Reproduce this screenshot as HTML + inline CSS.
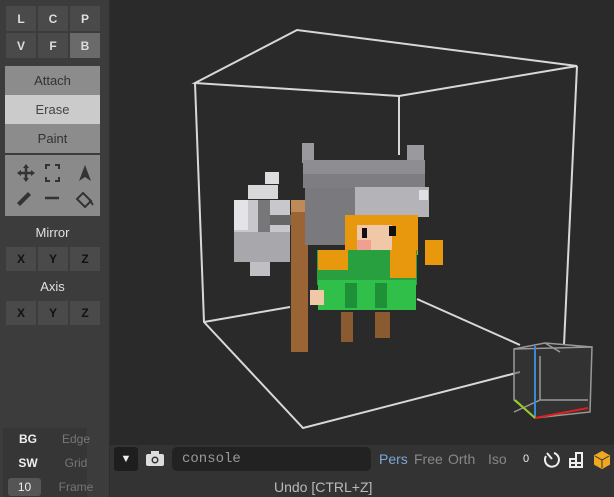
<!DOCTYPE html>
<html><head><meta charset="utf-8"><style>
*{margin:0;padding:0;box-sizing:border-box}
body{width:614px;height:497px;overflow:hidden;background:#2a2a2a;font-family:"Liberation Sans","DejaVu Sans",sans-serif;position:relative}
.side{position:absolute;left:0;top:0;width:110px;height:497px;background:#3c3c3c;border-right:1px solid #2e2e2e}
.a{position:absolute;display:flex;align-items:center;justify-content:center;font-size:13px}
.g{background:#4a4a4a;color:#ddd;border:1px solid #3c3c3c;font-weight:bold;font-size:12px}
.lbl{color:#e0e0e0;font-size:13px}
.bb{position:absolute;left:110px;top:445px;width:504px;height:52px;background:#333}
.t{position:absolute;font-size:14px}
</style></head><body>
<div class="side">
 <div class="a g" style="left:5px;top:5px;width:32px;height:27px">L</div>
 <div class="a g" style="left:37px;top:5px;width:32px;height:27px">C</div>
 <div class="a g" style="left:69px;top:5px;width:32px;height:27px">P</div>
 <div class="a g" style="left:5px;top:32px;width:32px;height:27px">V</div>
 <div class="a g" style="left:37px;top:32px;width:32px;height:27px">F</div>
 <div class="a g" style="left:69px;top:32px;width:32px;height:27px;background:#6a6a6a">B</div>
 <div class="a" style="left:5px;top:66px;width:95px;height:29px;background:#8c8c8c;color:#333">Attach</div>
 <div class="a" style="left:5px;top:95px;width:95px;height:29px;background:#cbcbcb;color:#444">Erase</div>
 <div class="a" style="left:5px;top:124px;width:95px;height:29px;background:#8c8c8c;color:#333">Paint</div>
 <div style="position:absolute;left:5px;top:155px;width:95px;height:61px;background:#8a8a8a"></div>
 <svg style="position:absolute;left:5px;top:155px" width="95" height="61" viewBox="0 0 95 61" fill="#333" stroke="#333">
  <path d="M15 18h12M21 12v12" stroke-width="2.5" fill="none"/><path d="M21 9l-3 4h6zM21 27l-3-4h6zM12 18l4-3v6zM30 18l-4-3v6z" stroke="none"/>
  <path d="M41 14v-4h4M50 10h4v4M54 22v4h-4M45 26h-4v-4" stroke-width="2" fill="none"/>
  <path d="M80 10l6 16l-6-4l-6 4z" stroke="none"/>
  <path d="M12 48l8-8l3 3l-8 8zM20 40l3-3l3 3l-3 3z" stroke="none"/>
  <path d="M40 43h14" stroke-width="2.5"/>
  <path d="M78 38l8 8l-6 6l-8-8zM84 44l4 6" stroke-width="2" fill="none"/>
 </svg>
 <div class="a lbl" style="left:5px;top:224px;width:95px;height:16px">Mirror</div>
 <div class="a g" style="left:5px;top:246px;width:32px;height:26px;color:#111">X</div>
 <div class="a g" style="left:37px;top:246px;width:32px;height:26px;color:#111">Y</div>
 <div class="a g" style="left:69px;top:246px;width:32px;height:26px;color:#111">Z</div>
 <div class="a lbl" style="left:5px;top:278px;width:95px;height:16px">Axis</div>
 <div class="a g" style="left:5px;top:300px;width:32px;height:26px;color:#111">X</div>
 <div class="a g" style="left:37px;top:300px;width:32px;height:26px;color:#111">Y</div>
 <div class="a g" style="left:69px;top:300px;width:32px;height:26px;color:#111">Z</div>
 <div style="position:absolute;left:3px;top:428px;width:84px;height:69px;background:#363636"></div>
 <div class="a" style="left:8px;top:431px;width:40px;height:16px;color:#eee;font-weight:bold;font-size:12px">BG</div>
 <div class="a" style="left:55px;top:431px;width:42px;height:16px;color:#777;font-size:12px">Edge</div>
 <div class="a" style="left:8px;top:455px;width:40px;height:16px;color:#eee;font-weight:bold;font-size:12px">SW</div>
 <div class="a" style="left:55px;top:455px;width:42px;height:16px;color:#777;font-size:12px">Grid</div>
 <div class="a" style="left:8px;top:478px;width:33px;height:18px;background:#555;color:#eee;font-size:12px;border-radius:3px">10</div>
 <div class="a" style="left:55px;top:479px;width:42px;height:16px;color:#777;font-size:12px">Frame</div>
</div>
<svg style="position:absolute;left:0;top:0" width="614" height="445">
 <g stroke="#d8d8d8" stroke-width="2" fill="none">
  <path d="M195 83L297 30L577 66L399 96Z"/>
  <path d="M195 83L204 322L303 428L520 372"/>
  <path d="M577 66L564 345"/>
  <path d="M399 96V155"/>
  <path d="M204 322L290 307M417 299L520 345"/>
 </g>
 <rect x="265" y="172" width="14" height="12" fill="#ddd"/>
 <rect x="248" y="185" width="30" height="14" fill="#d8d8da"/>
 <rect x="234" y="200" width="56" height="45" fill="#c8c8cc"/>
 <rect x="234" y="200" width="14" height="30" fill="#e4e4e8"/>
 <rect x="258" y="200" width="12" height="60" fill="#77777a"/>
 <rect x="234" y="232" width="56" height="30" fill="#a8a8ac"/>
 <rect x="250" y="262" width="20" height="14" fill="#c0c0c4"/>
 <rect x="270" y="215" width="30" height="10" fill="#666"/>
 <rect x="291" y="200" width="17" height="152" fill="#9a6434"/>
 <rect x="291" y="200" width="17" height="12" fill="#c08a58"/>
 <rect x="302" y="143" width="12" height="20" fill="#9a9a9e"/>
 <rect x="407" y="145" width="17" height="20" fill="#9a9a9e"/>
 <rect x="303" y="160" width="122" height="14" fill="#8e8e92"/>
 <rect x="303" y="174" width="122" height="14" fill="#7e7e82"/>
 <rect x="305" y="188" width="50" height="57" fill="#7a7a7e"/>
 <rect x="355" y="187" width="74" height="30" fill="#b4b4b8"/>
 <rect x="419" y="190" width="9" height="10" fill="#e0e0e4"/>
 <rect x="345" y="215" width="73" height="40" fill="#e8980c"/>
 <rect x="357" y="225" width="35" height="30" fill="#f0c8a8"/>
 <rect x="357" y="240" width="14" height="12" fill="#f0a090"/>
 <rect x="362" y="228" width="5" height="10" fill="#111"/>
 <rect x="389" y="226" width="7" height="10" fill="#111"/>
 <rect x="317" y="250" width="100" height="35" fill="#28a040"/>
 <rect x="318" y="250" width="30" height="20" fill="#e8980c"/>
 <rect x="390" y="250" width="26" height="28" fill="#e8980c"/>
 <rect x="425" y="240" width="18" height="25" fill="#e8980c"/>
 <rect x="318" y="280" width="98" height="30" fill="#30c04a"/>
 <rect x="345" y="283" width="12" height="25" fill="#1e9038"/>
 <rect x="375" y="283" width="12" height="25" fill="#1e9038"/>
 <rect x="310" y="290" width="14" height="15" fill="#f0c8a8"/>
 <rect x="341" y="312" width="12" height="30" fill="#8a5a30"/>
 <rect x="375" y="312" width="15" height="26" fill="#8a5a30"/>
 <g fill="none" stroke="#999" stroke-width="1.5">
  <path d="M514 349L592 347L590 412L535 418L514 400Z" fill="#3a3a3a" fill-opacity=".5"/>
  <path d="M514 349L545 343L592 347M545 343L560 352M540 356V400L514 412M540 400H588M535 350V418"/>
 </g>
 <path d="M535 346V418" stroke="#3a8ad8" stroke-width="2"/>
 <path d="M535 418L588 408" stroke="#e02020" stroke-width="2"/>
 <path d="M515 400L535 418" stroke="#9acc20" stroke-width="2"/>
</svg>
<div class="bb"></div>
<div class="a" style="left:114px;top:447px;width:24px;height:24px;background:#1e1e1e;color:#eee;font-size:11px;border-radius:3px">▼</div>
<svg style="position:absolute;left:146px;top:451px" width="18" height="15"><rect x="0" y="3" width="18" height="12" rx="2" fill="#ddd"/><rect x="5" y="0" width="8" height="4" fill="#ddd"/><circle cx="9" cy="9" r="3.5" fill="#333"/><circle cx="9" cy="9" r="2" fill="#ddd"/></svg>
<div style="position:absolute;left:172px;top:447px;width:199px;height:24px;background:#222;border-radius:5px;color:#999;font-family:'Liberation Mono',monospace;font-size:14px;line-height:24px;padding-left:10px">console</div>
<div class="t" style="left:379px;top:451px;color:#7ea6d8">Pers</div>
<div class="t" style="left:414px;top:451px;color:#888">Free</div>
<div class="t" style="left:448px;top:451px;color:#888">Orth</div>
<div class="t" style="left:488px;top:451px;color:#888">Iso</div>
<div class="t" style="left:523px;top:453px;color:#eee;font-size:11px">0</div>
<svg style="position:absolute;left:543px;top:450px" width="70" height="20" fill="none" stroke="#eee" stroke-width="2">
 <path d="M3 6A7 7 0 1 0 11 3M4 3l5 6"/>
 <path d="M27 17V9h6V3h6v14zM27 13h12M33 9v8"/>
 <path d="M52 6l7-4l7 4v8l-7 4l-7-4z" fill="#f0a820" stroke="#f0a820"/><path d="M52 6l7 4l7-4M59 10v8" stroke="#333" stroke-width="1"/>
</svg>
<div class="t" style="left:274px;top:479px;color:#bbb">Undo [CTRL+Z]</div>
</body></html>
